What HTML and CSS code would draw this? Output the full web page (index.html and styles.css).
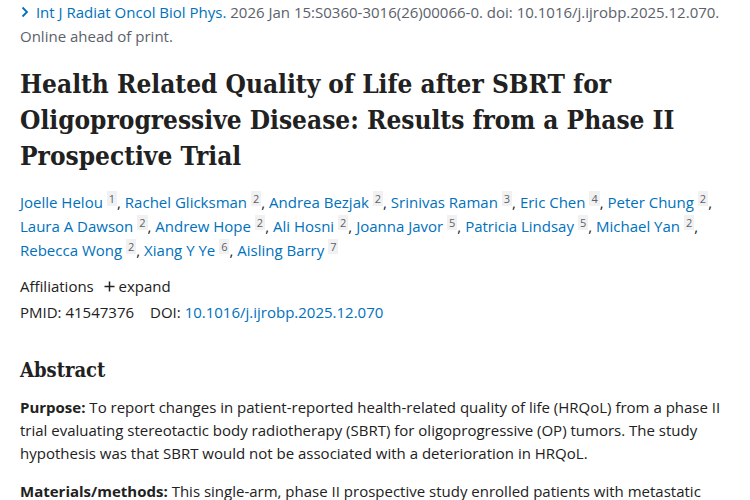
FILE: index.html
```html
<!DOCTYPE html>
<html>
<head>
<meta charset="utf-8">
<link rel="stylesheet" href="styles.css">
</head>
<body>
<main class="article">
  <div class="citation">
    <span class="chev"><svg width="10" height="12" viewBox="0 0 10 12"><path d="M2.5 1.5 L7 6 L2.5 10.5" fill="none" stroke="#0071bc" stroke-width="1.8"/></svg></span>
    <a class="journal" href="#">Int J Radiat Oncol Biol Phys.</a>
    <span class="cit">2026 Jan 15:S0360-3016(26)00066-0. doi: 10.1016/j.ijrobp.2025.12.070.</span>
    <div class="status">Online ahead of print.</div>
  </div>

  <h1 class="title">Health Related Quality of Life after SBRT for Oligoprogressive Disease: Results from a Phase II Prospective Trial</h1>

  <div class="authors">
    <span class="au"><a href="#">Joelle Helou</a> <sup>1</sup>,</span> <span class="au"><a href="#">Rachel Glicksman</a> <sup>2</sup>,</span> <span class="au"><a href="#">Andrea Bezjak</a> <sup>2</sup>,</span> <span class="au"><a href="#">Srinivas Raman</a> <sup>3</sup>,</span> <span class="au"><a href="#">Eric Chen</a> <sup>4</sup>,</span> <span class="au"><a href="#">Peter Chung</a> <sup>2</sup>,</span> <span class="au"><a href="#">Laura A Dawson</a> <sup>2</sup>,</span> <span class="au"><a href="#">Andrew Hope</a> <sup>2</sup>,</span> <span class="au"><a href="#">Ali Hosni</a> <sup>2</sup>,</span> <span class="au"><a href="#">Joanna Javor</a> <sup>5</sup>,</span> <span class="au"><a href="#">Patricia Lindsay</a> <sup>5</sup>,</span> <span class="au"><a href="#">Michael Yan</a> <sup>2</sup>,</span> <span class="au"><a href="#">Rebecca Wong</a> <sup>2</sup>,</span> <span class="au"><a href="#">Xiang Y Ye</a> <sup>6</sup>,</span> <span class="au"><a href="#">Aisling Barry</a> <sup>7</sup></span>
  </div>

  <div class="affil">Affiliations <span class="expand"><svg width="11" height="11" viewBox="0 0 11 11"><path d="M5.5 0.5 V10.5 M0.5 5.5 H10.5" stroke="#212121" stroke-width="1.5"/></svg> expand</span></div>
  <div class="ids"><span class="pmid">PMID: 41547376</span><span class="doi">DOI: <a href="#">10.1016/j.ijrobp.2025.12.070</a></span></div>

  <h2 class="abs-title">Abstract</h2>
  <p class="abs"><strong>Purpose:</strong> To report changes in patient-reported health-related quality of life (HRQoL) from a phase II trial evaluating stereotactic body radiotherapy (SBRT) for oligoprogressive (OP) tumors. The study hypothesis was that SBRT would not be associated with a deterioration in HRQoL.</p>
  <p class="abs"><strong>Materials/methods:</strong> This single-arm, phase II prospective study enrolled patients with metastatic cancer who had up to 5 sites of oligoprogression while on systemic therapy.</p>
</main>
</body>
</html>
```

FILE: styles.css
```css
html, body { margin: 0; padding: 0; background: #fff; }
body {
  font-family: "Open Sans", "Noto Sans", sans-serif;
  font-size: 15px;
  color: #212121;
}
a { color: #0071bc; text-decoration: none; }
.article { padding: 0 18px 0 20px; }
.citation { line-height: 24px; }
.chev { display: inline-block; width: 12px; }
.cit { color: #5b616b; }
.status { color: #5b616b; }
.title {
  font-family: "DejaVu Serif Condensed", "DejaVu Serif", serif;
  font-stretch: condensed;
  font-weight: bold;
  font-size: 26px;
  line-height: 36px;
  margin: 18px 0 16px;
  color: #212121;
  max-width: 680px;
}
.authors { line-height: 24px; }
.au { white-space: nowrap; }
.authors sup {
  font-size: 11px;
  color: #5b616b;
  background: #f1f1f1;
  padding: 0 2px;
  vertical-align: 5px;
  line-height: 1;
}
.affil { margin-top: 12px; line-height: 24px; }
.expand { margin-left: 6px; }
.ids { line-height: 24px; margin-top: 2px; }
.doi { margin-left: 16px; }
.abs-title {
  font-family: "DejaVu Serif Condensed", "DejaVu Serif", serif;
  font-stretch: condensed;
  font-weight: bold;
  font-size: 20px;
  margin: 32px 0 12px;
  line-height: 28px;
}
.abs { margin: 0 0 15px; line-height: 23px; }
```
